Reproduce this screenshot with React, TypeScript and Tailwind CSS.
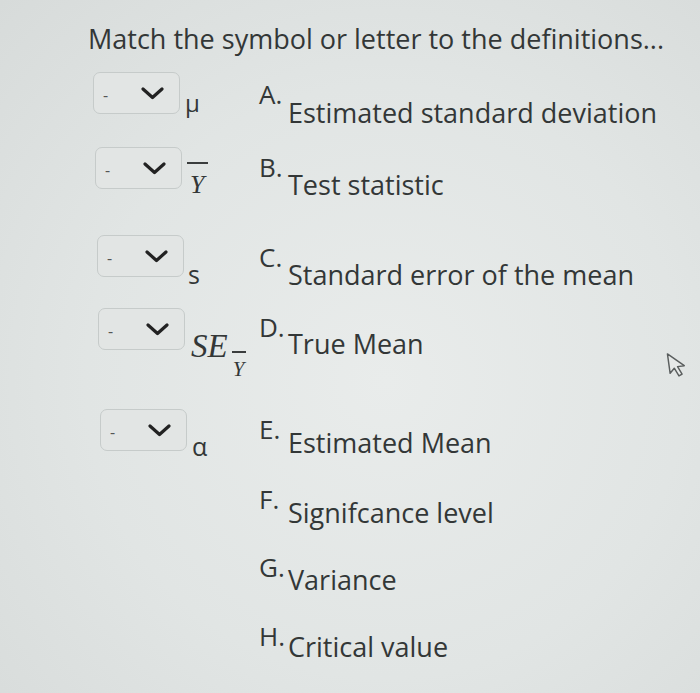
import type { ReactNode } from 'react'

// Canvas style "- v" dropdown
function Picker() {
  return (
    <div className="flex items-center w-[87px] h-[42px] shrink-0 rounded-[7px] border-[1.5px] border-[#c6cbca] bg-[#e2e5e4]">
      <span className="ml-[9px] mt-[3px] text-[16px] leading-none text-[#555]">-</span>
      <svg className="ml-auto mr-[15px]" width="23" height="13" viewBox="0 0 23 13" fill="none">
        <polyline points="2,2 11.5,10.5 21,2" stroke="#222" strokeWidth="3.2" strokeLinecap="round" strokeLinejoin="round" />
      </svg>
    </div>
  )
}

function YBar() {
  return (
    <div className="flex flex-col items-start ml-[5px]">
      <div className="mt-[15px] w-[21px] h-[2px] bg-[#3a3d3d]" />
      <span className="mt-[11px] pl-[3px] text-[26px] leading-[20px] italic" style={{ fontFamily: '"Liberation Serif", serif' }}>
        Y
      </span>
    </div>
  )
}

function SeY() {
  return (
    <div className="flex items-start ml-[6px]" style={{ fontFamily: '"Liberation Serif", serif' }}>
      <span className="mt-[22px] text-[33px] leading-[33px] italic">SE</span>
      <div className="flex flex-col items-start ml-[4px]">
        <div className="mt-[43px] w-[14px] h-[2px] bg-[#3a3d3d]" />
        <span className="mt-[7px] pl-[1px] text-[21px] leading-[18px] italic">Y</span>
      </div>
    </div>
  )
}

interface Row {
  h: string
  pl: string
  sym?: ReactNode
  letter: string
  lmt: string
  text: string
  tmt: string
}

const rows: Row[] = [
  {
    h: 'h-[75px]',
    pl: 'pl-[93px]',
    sym: <span className="ml-[5px] mt-[19px] text-[24px] leading-[24px]">μ</span>,
    letter: 'A.',
    lmt: 'mt-[9px]',
    text: 'Estimated standard deviation',
    tmt: 'mt-[27px]',
  },
  { h: 'h-[88px]', pl: 'pl-[95px]', sym: <YBar />, letter: 'B.', lmt: 'mt-[7px]', text: 'Test statistic', tmt: 'mt-[24px]' },
  {
    h: 'h-[73px]',
    pl: 'pl-[97px]',
    sym: <span className="ml-[4px] mt-[27px] text-[25px] leading-[24px]">s</span>,
    letter: 'C.',
    lmt: 'mt-[9px]',
    text: 'Standard error of the mean',
    tmt: 'mt-[26px]',
  },
  { h: 'h-[101px]', pl: 'pl-[98px]', sym: <SeY />, letter: 'D.', lmt: 'mt-[6px]', text: 'True Mean', tmt: 'mt-[22px]' },
  {
    h: 'h-[69px]',
    pl: 'pl-[100px]',
    sym: <span className="ml-[5px] mt-[25px] text-[25px] leading-[24px]">α</span>,
    letter: 'E.',
    lmt: 'mt-[7px]',
    text: 'Estimated Mean',
    tmt: 'mt-[20px]',
  },
  { h: 'h-[68px]', pl: 'pl-[100px]', letter: 'F.', lmt: 'mt-[8px]', text: 'Signifcance level', tmt: 'mt-[21px]' },
  { h: 'h-[69px]', pl: 'pl-[100px]', letter: 'G.', lmt: 'mt-[8px]', text: 'Variance', tmt: 'mt-[20px]' },
  { h: 'h-[70px]', pl: 'pl-[100px]', letter: 'H.', lmt: 'mt-[8px]', text: 'Critical value', tmt: 'mt-[18px]' },
]

export default function App() {
  return (
    <div
      className="relative w-[700px] h-[693px] overflow-hidden text-[#333737] bg-[radial-gradient(ellipse_at_55%_55%,#e9eceb_0%,#e1e5e4_55%,#d7dbda_100%)]"
      style={{ fontFamily: '"Open Sans", sans-serif' }}
    >
      <h1 className="pl-[88px] pt-[21px] text-[27px] leading-[36px] font-normal whitespace-nowrap">
        Match the symbol or letter to the definitions...
      </h1>

      <div className="mt-[15px] flex flex-col">
        {rows.map((r) => (
          <div key={r.letter} className={`flex items-start ${r.h}`}>
            <div className={`flex items-start w-[259px] shrink-0 ${r.pl}`}>
              {r.sym && (
                <>
                  <Picker />
                  {r.sym}
                </>
              )}
            </div>
            <span className={`w-[29px] shrink-0 text-[26px] leading-[26px] ${r.lmt}`}>{r.letter}</span>
            <span className={`text-[27px] leading-[27px] whitespace-nowrap ${r.tmt}`}>{r.text}</span>
          </div>
        ))}
      </div>

      {/* mouse pointer */}
      <svg className="absolute left-[667px] top-[351px] rotate-[-8deg]" width="21" height="29" viewBox="0 0 18 26" fill="none">
        <path
          d="M1.5 1.5 L1.5 19 L5.8 15 L9 22.5 L12 21.2 L8.9 14 L15 14 Z"
          fill="#e6e9e8"
          stroke="#5a5e5e"
          strokeWidth="1.3"
          strokeLinejoin="round"
        />
      </svg>
    </div>
  )
}
